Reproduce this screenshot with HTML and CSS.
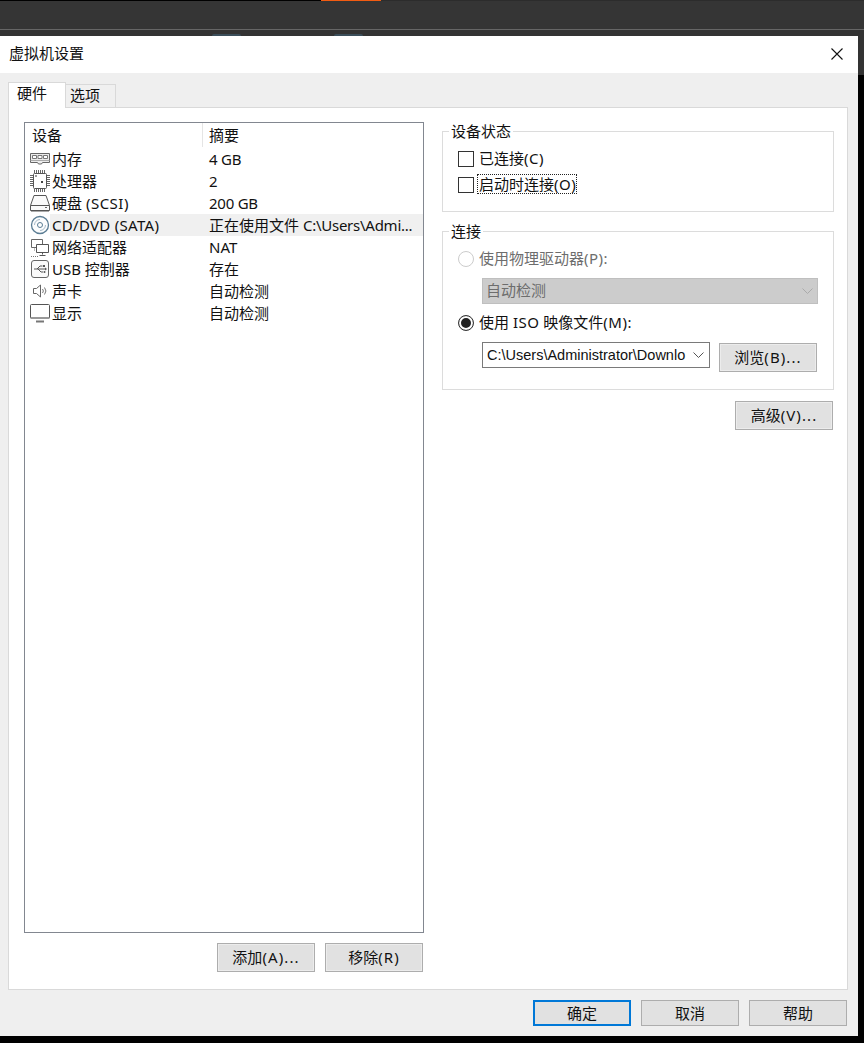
FILE: index.html
```html
<!DOCTYPE html>
<html lang="zh-CN">
<head>
<meta charset="utf-8">
<title>虚拟机设置</title>
<link rel="stylesheet" href="styles.css">
</head>
<body>
<header class="topbar">
  <div class="topline"><span class="topline-black"></span><span class="topline-accent"></span></div>
  <div class="topfill"></div>
  <div class="toplower"><span class="blob"></span><span class="blob"></span></div>
</header>
<div class="desk">
  <main class="dialog">
    <div class="titlebar">
      <span class="title">虚拟机设置</span>
      <svg class="close" width="12" height="12" viewBox="0 0 12 12"><path d="M0.5 0.5L11.5 11.5M11.5 0.5L0.5 11.5" stroke="#111" stroke-width="1.1" fill="none"/></svg>
    </div>
    <div class="body">
      <div class="tabs">
        <div class="tab tab-active">硬件</div>
        <div class="tab">选项</div>
      </div>
      <div class="panel">
        <section class="left">
          <div class="list">
            <div class="list-head"><div class="head-name">设备</div><div class="head-sum">摘要</div></div>
            <div class="row">
              <svg class="ico" width="20" height="22" viewBox="0 0 20 22"><path d="M.5 5.500h19v9h-7l-1 1.500h-3l-1-1.500h-7z" fill="#ececec" stroke="#666"/><path d="M2.500 7.500h4v3h-4zM8 7.500h4v3H8zM13.500 7.500h4v3h-4z" fill="#fff" stroke="#777"/><path d="M.5 12.500h19" stroke="#aaa"/></svg>
              <div class="cells"><span class="name">内存</span><span class="sum"><span class="tight">4 GB</span></span></div>
            </div>
            <div class="row">
              <svg class="ico" width="20" height="22" viewBox="0 0 20 22"><rect x="3.500" y="3.500" width="13" height="15" rx="1" fill="#fff" stroke="#555"/><path d="M4 1.500h12M4 20.500h12M1.500 5v12M18.500 5v12" stroke="#666" stroke-width="3" stroke-dasharray="1 1" fill="none"/><rect x="11" y="11" width="2" height="2" fill="#444"/><rect x="5" y="5" width="2" height="2" fill="#999"/></svg>
              <div class="cells"><span class="name">处理器</span><span class="sum">2</span></div>
            </div>
            <div class="row">
              <svg class="ico" width="20" height="22" viewBox="0 0 20 22"><path d="M.5 13.500L4 3.500h12l3.500 10v5h-19z" fill="#fafafa" stroke="#555"/><path d="M.5 13.500h19" stroke="#555"/><rect x="15" y="15" width="2" height="1" fill="#666"/><path d="M1 19.500h18" stroke="#aaa"/></svg>
              <div class="cells"><span class="name">硬盘 <span class="wider">(SCSI)</span></span><span class="sum"><span class="tight">200 GB</span></span></div>
            </div>
            <div class="row row-selected">
              <svg class="ico" width="20" height="22" viewBox="0 0 20 22"><circle cx="10" cy="11" r="8.500" fill="#fbfcfd" stroke="#5a7c93" stroke-width="1.300"/><circle cx="10" cy="11" r="2.500" fill="#fff" stroke="#5a7c93"/><path d="M4.500 11a5.500 5.500 0 0 1 5.500-5.500" stroke="#a8bbc9" fill="none"/><path d="M15.500 11a5.500 5.500 0 0 1-5.500 5.500" stroke="#a8bbc9" fill="none"/></svg>
              <div class="cells"><span class="name"><span class="wide">CD/DVD (SATA)</span></span><span class="sum">正在使用文件 <span class="tight">C:\Users\Admi...</span></span></div>
            </div>
            <div class="row">
              <svg class="ico" width="20" height="22" viewBox="0 0 20 22"><path d="M1.500 3.500h11v8h-11z" fill="#fff" stroke="#666"/><path d="M6.500 8.500h12v8h-12z" fill="#fff" stroke="#555"/><path d="M12.500 16.500v2M9.500 19.500h6" stroke="#555"/><path d="M4.500 11.500v4M1 20.500h7" stroke="#777" stroke-dasharray="1 1"/></svg>
              <div class="cells"><span class="name">网络适配器</span><span class="sum">NAT</span></div>
            </div>
            <div class="row">
              <svg class="ico" width="20" height="22" viewBox="0 0 20 22"><rect x="1.500" y="2.500" width="17" height="17" rx="2.500" fill="#fafafa" stroke="#666"/><path d="M4 11h11M7 11l3-3h2.500M8 11l3 3h2" stroke="#555" fill="none"/><rect x="13" y="7" width="2" height="2" fill="#555"/><circle cx="14.500" cy="14" r="1" fill="#555"/><path d="M15 9.500l2 1.500-2 1.500z" fill="#555"/></svg>
              <div class="cells"><span class="name">USB 控制器</span><span class="sum">存在</span></div>
            </div>
            <div class="row">
              <svg class="ico" width="20" height="22" viewBox="0 0 20 22"><path d="M3.500 8.500h3l4-3.500v12l-4-3.500h-3z" fill="#fff" stroke="#666"/><path d="M12.500 9a3 3 0 0 1 0 4M14.500 7.500a5.500 5.500 0 0 1 0 7" stroke="#777" fill="none"/></svg>
              <div class="cells"><span class="name">声卡</span><span class="sum">自动检测</span></div>
            </div>
            <div class="row">
              <svg class="ico" width="20" height="22" viewBox="0 0 20 22"><rect x=".5" y="2.500" width="19" height="14" rx="1" fill="#fff" stroke="#555"/><path d="M1 16h18" stroke="#999" stroke-width="2"/><path d="M6 19.500h8" stroke="#777" stroke-width="2"/></svg>
              <div class="cells"><span class="name">显示</span><span class="sum">自动检测</span></div>
            </div>
          </div>
          <div class="list-actions">
            <button class="btn" type="button">添加<span class="mn">(A)...</span></button>
            <button class="btn" type="button">移除<span class="mn">(R)</span></button>
          </div>
        </section>
        <section class="right">
          <fieldset class="group">
            <legend class="legend">设备状态</legend>
            <label class="option option-first"><input class="check" type="checkbox"><span class="option-text">已连接<span class="mn">(C)</span></span></label>
            <label class="option"><input class="check" type="checkbox"><span class="option-text focus">启动时连接<span class="mn">(O)</span></span></label>
          </fieldset>
          <fieldset class="group group-second">
            <legend class="legend">连接</legend>
            <label class="option option-first option-disabled"><input class="radio" type="radio" name="src" disabled><span class="option-text">使用物理驱动器<span class="mn">(P):</span></span></label>
            <div class="select select-disabled"><span class="select-text">自动检测</span>
              <svg width="11" height="6" viewBox="0 0 11 6"><path d="M.5.5l5 5 5-5" stroke="#aaa" fill="none"/></svg>
            </div>
            <label class="option option-spaced"><input class="radio" type="radio" name="src" checked><span class="option-text">使用 <span class="mn">ISO</span> 映像文件<span class="mn">(M):</span></span></label>
            <div class="file-row">
              <div class="select select-file"><span class="file-text">C:\Users\Administrator\Downlo</span>
                <svg width="11" height="6" viewBox="0 0 11 6"><path d="M.5.5l5 5 5-5" stroke="#555" fill="none"/></svg>
              </div>
              <button class="btn btn-browse" type="button">浏览<span class="mn">(B)...</span></button>
            </div>
          </fieldset>
          <div class="advanced"><button class="btn" type="button">高级<span class="mn">(V)...</span></button></div>
        </section>
      </div>
      <footer class="footer">
        <button class="btn btn-short btn-primary" type="button">确定</button>
        <button class="btn btn-short" type="button">取消</button>
        <button class="btn btn-short" type="button">帮助</button>
      </footer>
    </div>
  </main>
  <div class="strip"></div>
</div>
</body>
</html>
```
FILE: styles.css
```css
* { box-sizing: border-box; }
html, body { margin: 0; padding: 0; }
body {
  width: 864px;
  height: 1043px;
  overflow: hidden;
  background: #000;
  color: #111;
  font: 15px/22px "Noto Sans", "Noto Sans CJK SC", sans-serif;
}

/* backdrop above the dialog */
.topbar { height: 36px; background: #353535; display: flex; flex-direction: column; }
.topline { height: 1px; background: #2c2c2c; display: flex; }
.topline-black { width: 321px; background: #000; }
.topline-accent { width: 60px; background: #f25c12; }
.topfill { height: 28px; }
.toplower {
  flex: 1;
  border-top: 1px solid #666;
  background: #333;
  display: flex;
  align-items: flex-end;
  padding-left: 212px;
  gap: 93px;
}
.blob { width: 29px; height: 2px; border-radius: 2px 2px 0 0; background: #3b4e5a; }

.desk { display: flex; align-items: flex-start; }
.strip { width: 6px; height: 39px; background: #333; }

/* dialog */
.dialog { width: 858px; height: 1000px; display: flex; flex-direction: column; background: #efefef; }
.titlebar {
  height: 37px;
  flex: none;
  background: #fff;
  display: flex;
  align-items: center;
  justify-content: space-between;
  padding: 0 15px 1px 9px;
}
.title { line-height: 34px; height: 36px; }
.close { display: block; }

.body { flex: 1; padding: 9px 10px 0 8px; display: flex; flex-direction: column; }

.tabs { display: flex; align-items: flex-end; height: 26px; margin-bottom: -1px; position: relative; z-index: 1; }
.tab {
  width: 50px;
  height: 24px;
  border: 1px solid #d9d9d9;
  border-left: 0;
  background: #f0f0f0;
  padding-left: 4px;
  line-height: 21px;
}
.tab-active {
  width: 58px;
  height: 26px;
  border-left: 1px solid #d9d9d9;
  border-bottom: 0;
  background: #fff;
  padding-left: 8px;
  line-height: 20px;
}

.panel {
  height: 883px;
  flex: none;
  background: #fff;
  border: 1px solid #d9d9d9;
  padding: 14px 0 0 15px;
  display: flex;
  gap: 18px;
  align-items: flex-start;
}

/* device list */
.left { width: 400px; }
.list { height: 811px; border: 1px solid #828790; }
.list-head { height: 25px; display: flex; }
.head-name { width: 178px; padding-left: 7px; border-right: 1px solid #e5e5e5; height: 24px; line-height: 24px; }
.head-sum { padding-left: 6px; line-height: 24px; }
.row { height: 22px; display: flex; }
.ico { flex: none; display: block; margin-left: 5px; }
.cells { flex: 1; display: flex; white-space: nowrap; line-height: 22px; }
.row-selected .cells { background: #f0f0f0; }
.name { width: 153px; padding-left: 2px; }
.sum { padding-left: 6px; }
.wide { letter-spacing: .3px; }
.wider { letter-spacing: .5px; }
.tight { letter-spacing: -.25px; }

.list-actions { display: flex; justify-content: flex-end; gap: 10px; margin-top: 10px; padding-right: 1px; }

/* buttons */
.btn {
  width: 98px;
  height: 29px;
  padding: 0 0 2px;
  background: #e1e1e1;
  border: 1px solid #adadad;
  outline: 1px solid #ececec;
  outline-offset: -2px;
  color: #111;
  font: inherit;
  line-height: 22px;
}
.btn .mn { letter-spacing: 1.1px; }
.btn-short { height: 26px; outline: 0; padding: 0 0 1px; }
.btn-primary { border: 2px solid #0078d7; }

/* right column */
.right { width: 392px; margin-top: -1px; }
.group { margin: 0; padding: 0 15px 13px; min-width: 0; border: 1px solid #dcdcdc; }
.group-second { margin-top: 9px; padding-bottom: 17px; }
.legend { margin-left: -9px; padding: 0 2px; line-height: 20px; height: 20px; }

.option { height: 26px; display: flex; align-items: center; gap: 5px; line-height: 20px; }
.option .mn { letter-spacing: .5px; }
.option-text { margin-bottom: 2px; }
.option-first { margin-top: 5px; }
.option-spaced { margin-top: 6px; }
.option-disabled { color: #6d6d6d; }

.check, .radio {
  appearance: none;
  width: 16px;
  height: 16px;
  margin: 0;
  flex: none;
  background: #fff;
  border: 1px solid #333;
}
.radio { border-radius: 50%; }
.radio:checked { box-shadow: inset 0 0 0 2px #fff, inset 0 0 0 8px #222; }
.radio:disabled { border-color: #ccc; }
.focus { outline: 1px dotted #222; margin-left: -1px; padding-left: 1px; line-height: 18px; }

.select {
  height: 26px;
  margin-left: 24px;
  display: flex;
  align-items: center;
  justify-content: space-between;
  white-space: nowrap;
  line-height: 20px;
}
.select-disabled {
  width: 336px;
  margin-top: 6px;
  background: #ccc;
  border: 1px solid #bfbfbf;
  color: #6d6d6d;
  padding: 0 4px 0 3px;
}
.select-text { margin-bottom: 2px; }
.file-row { display: flex; align-items: flex-start; gap: 9px; margin-top: 6px; }
.select-file { width: 228px; background: #fff; border: 1px solid #7a7a7a; padding: 0 5px 0 4px; }
.file-text { width: 200px; overflow: hidden; font-family: "Liberation Sans", sans-serif; font-size: 14.5px; }
.btn-browse { margin-top: 1px; }

.advanced { display: flex; justify-content: flex-end; margin-top: 11px; padding-right: 1px; }

.footer { display: flex; justify-content: flex-end; gap: 10px; margin-top: 10px; padding-right: 1px; }
```
